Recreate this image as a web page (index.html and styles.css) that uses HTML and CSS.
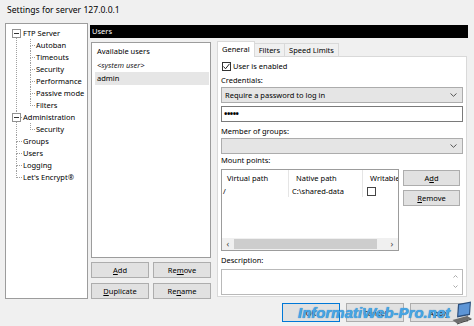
FILE: index.html
```html
<!DOCTYPE html>
<html lang="en">
<head>
    <meta charset="UTF-8">
    <meta name="viewport" content="width=device-width, initial-scale=1.0">
    <title>Settings for server 127.0.0.1</title>
    <link rel="stylesheet" href="styles.css">
</head>
<body>
<div class="window">
    <div class="title">Settings for server 127.0.0.1</div>

    <div class="main">
        <!-- Settings tree -->
        <ul class="tree">
            <li><span class="tgl"></span>FTP Server
                <ul>
                    <li>Autoban</li>
                    <li>Timeouts</li>
                    <li>Security</li>
                    <li>Performance</li>
                    <li>Passive mode</li>
                    <li>Filters</li>
                </ul>
            </li>
            <li><span class="tgl"></span>Administration
                <ul>
                    <li>Security</li>
                </ul>
            </li>
            <li>Groups</li>
            <li>Users</li>
            <li>Logging</li>
            <li>Let's Encrypt&reg;</li>
        </ul>

        <div class="page">
            <div class="page-head">Users</div>
            <div class="page-body">

                <!-- User list -->
                <div class="users">
                    <div class="list">
                        <div class="list-head">Available users</div>
                        <div class="list-item sys">&lt;system user&gt;</div>
                        <div class="list-item sel">admin</div>
                    </div>
                    <div class="btn-grid">
                        <button><u>A</u>dd</button>
                        <button>Re<u>m</u>ove</button>
                        <button><u>D</u>uplicate</button>
                        <button>Re<u>n</u>ame</button>
                    </div>
                </div>

                <!-- User settings tabs -->
                <div class="tabs">
                    <div class="tab-row">
                        <div class="tab active">General</div>
                        <div class="tab">Filters</div>
                        <div class="tab">Speed Limits</div>
                    </div>
                    <div class="tab-panel">
                        <div class="check-row">
                            <span class="check on">
                                <svg width="7" height="7" viewBox="0 0 7 7"><polyline points="0.5,3.5 2.5,5.8 6.5,0.8" fill="none" stroke="#222" stroke-width="1"/></svg>
                            </span>
                            User is enabled
                        </div>
                        <div class="label">Credentials:</div>
                        <div class="select">
                            Require a password to log in
                            <svg class="chev" width="7" height="4" viewBox="0 0 7 4"><polyline points="0.5,0.5 3.5,3.3 6.5,0.5" fill="none" stroke="#555" stroke-width="1"/></svg>
                        </div>
                        <div class="input">&bull;&bull;&bull;&bull;&bull;</div>
                        <div class="label">Member of groups:</div>
                        <div class="select">
                            <svg class="chev" width="7" height="4" viewBox="0 0 7 4"><polyline points="0.5,0.5 3.5,3.3 6.5,0.5" fill="none" stroke="#555" stroke-width="1"/></svg>
                        </div>
                        <div class="label lbl-mount">Mount points:</div>

                        <div class="mount">
                            <div class="grid">
                                <div class="grid-row head">
                                    <div class="cell c1">Virtual path</div>
                                    <div class="cell c2">Native path</div>
                                    <div class="cell c3">Writable</div>
                                </div>
                                <div class="grid-row">
                                    <div class="cell c1">/</div>
                                    <div class="cell c2">C:\shared-data</div>
                                    <div class="cell c3"><span class="check"></span></div>
                                </div>
                                <div class="hscroll">
                                    <span class="arrow">&lsaquo;</span>
                                    <span class="thumb"></span>
                                    <span class="arrow right">&rsaquo;</span>
                                </div>
                            </div>
                            <div class="mount-btns">
                                <button>A<u>d</u>d</button>
                                <button><u>R</u>emove</button>
                            </div>
                        </div>

                        <div class="label">Description:</div>
                        <div class="textarea">
                            <div class="vscroll">
                                <svg width="5" height="3" viewBox="0 0 5 3"><polyline points="0.5,2.5 2.5,0.5 4.5,2.5" fill="none" stroke="#aaa" stroke-width="1"/></svg>
                                <svg width="5" height="3" viewBox="0 0 5 3"><polyline points="0.5,0.5 2.5,2.5 4.5,0.5" fill="none" stroke="#aaa" stroke-width="1"/></svg>
                            </div>
                        </div>
                    </div>
                </div>
            </div>
        </div>
    </div>

    <div class="footer">
        <button class="default">OK</button>
        <button>Cancel</button>
        <button>Apply</button>
    </div>

    <!-- site watermark over the buttons -->
    <div class="watermark">
        <span>InformatiWeb-Pro.net</span>
        <svg width="20" height="24" viewBox="0 0 20 24">
            <path d="M6 3 L19 0.5 L18 14 L5 16.5 Z" fill="#2b4f7e"/>
            <path d="M7.2 4 L17.8 2 L17 12.8 L6.3 14.8 Z" fill="#5d95d6"/>
            <path d="M0.5 19 L15 15 L19.5 17.5 L5 22.5 Z" fill="#6d6d6d"/>
            <path d="M5 22.5 L19.5 17.5 L19.5 18.6 L5 23.6 Z" fill="#3f3f3f"/>
        </svg>
    </div>
</div>
</body>
</html>
```

FILE: styles.css
```css
* { box-sizing: border-box; }

body {
    margin: 0;
    background: #f0f0f0;
    font-family: "Noto Sans", "Open Sans", sans-serif;
    font-size: 7.5px;
    color: #000;
}
.window {
    position: relative;
    width: 474px;
    height: 326px;
    overflow: hidden;
}
.title {
    height: 23px;
    padding: 4px 7px 0;
    line-height: 12px;
    font-size: 8.6px;
}
.main {
    display: flex;
    height: 277px;
    padding-left: 5px;
}

/* tree */
.tree {
    width: 83px;
    height: 276px;
    margin: 0;
    padding: 3px 0 0;
    list-style: none;
    background: #fff;
    border: 1px solid #9c9c9c;
}
.tree ul { margin: 0; padding: 0; list-style: none; }
.tree li {
    position: relative;
    padding-left: 17px;
    line-height: 12px;
    white-space: nowrap;
}
.tree ul li { padding-left: 13px; }
.tree li::before {
    content: "";
    position: absolute;
    left: 10px;
    top: 0;
    width: 5px;
    height: 6px;
    border-left: 1px dotted #a0a0a0;
    border-bottom: 1px dotted #a0a0a0;
}
.tree ul li::before { left: 7px; width: 4px; }
.tree li::after {
    content: "";
    position: absolute;
    left: 10px;
    top: 6px;
    bottom: 0;
    border-left: 1px dotted #a0a0a0;
}
.tree ul li::after { left: 7px; }
.tree li:last-child::after { display: none; }
.tree > li:first-child::before { border-left: none; }
.tgl {
    position: absolute;
    left: 6px;
    top: 2px;
    z-index: 1;
    width: 9px;
    height: 9px;
    background: #fff;
    border: 1px solid #919191;
}
.tgl::after {
    content: "";
    position: absolute;
    left: 1px;
    top: 3px;
    width: 5px;
    height: 1px;
    background: #333;
}

/* right page */
.page {
    width: 378px;
    margin-left: 2px;
    padding-top: 2px;
}
.page-head {
    height: 13px;
    padding-left: 2px;
    line-height: 13px;
    background: #000;
    color: #fff;
}
.page-body {
    display: flex;
    gap: 6px;
    padding: 4px 1px 0;
}

.users {
    width: 120px;
    display: flex;
    flex-direction: column;
    gap: 4px;
}
.list {
    height: 216px;
    background: #fff;
    border: 1px solid #9c9c9c;
}
.list-head {
    height: 16px;
    line-height: 16px;
    padding-left: 5px;
}
.list-item {
    height: 13px;
    line-height: 13px;
    margin: 0 1px 0 3px;
    padding-left: 2px;
}
.list-item.sys { font-style: italic; color: #222; }
.list-item.sel { background: #e6e6e6; }

button {
    font: inherit;
    color: #000;
    height: 16px;
    padding: 0;
    background: #e1e1e1;
    border: 1px solid #adadad;
}
.btn-grid {
    display: grid;
    grid-template-columns: 58px 58px;
    gap: 5px 4px;
}

/* tabs */
.tabs {
    width: 250px;
    margin-top: -1px;
}
.tab-row {
    display: flex;
    align-items: flex-end;
    height: 15px;
}
.tab {
    height: 13px;
    line-height: 12px;
    padding: 0 4px;
    margin-left: -1px;
    background: #f0f0f0;
    border: 1px solid #d9d9d9;
    border-bottom: none;
}
.tab.active {
    position: relative;
    z-index: 1;
    height: 16px;
    margin: 0 0 -1px;
    padding-top: 1px;
    background: #fff;
}
.tab-panel {
    height: 241px;
    padding: 4px 3px 0;
    background: #fff;
    border: 1px solid #d9d9d9;
}

.check-row {
    display: flex;
    align-items: center;
    gap: 2px;
    height: 10px;
    padding-left: 1px;
}
.check {
    display: inline-flex;
    align-items: center;
    justify-content: center;
    width: 9px;
    height: 9px;
    background: #fff;
    border: 1px solid #333;
}
.label {
    height: 12px;
    line-height: 12px;
    margin-top: 3px;
}
.select {
    position: relative;
    height: 16px;
    margin-top: 1px;
    padding-left: 3px;
    line-height: 14px;
    background: #e5e5e5;
    border: 1px solid #acacac;
}
.chev {
    position: absolute;
    right: 5px;
    top: 5px;
}
.input {
    height: 16px;
    margin-top: 3px;
    padding-left: 2px;
    line-height: 14px;
    font-size: 9px;
    font-weight: bold;
    letter-spacing: -0.5px;
    border: 1px solid #7a7a7a;
}
.label.lbl-mount { margin-top: 0; }

/* mount points */
.mount {
    display: flex;
    gap: 4px;
    height: 82px;
    margin-top: 3px;
}
.grid {
    display: flex;
    flex-direction: column;
    width: 178px;
    overflow: hidden;
    background: #fff;
    border: 1px solid #9c9c9c;
}
.grid-row {
    display: flex;
    height: 11px;
    line-height: 11px;
}
.grid-row.head { height: 16px; line-height: 16px; }
.cell {
    flex: none;
    white-space: nowrap;
    border-right: 1px solid #e5e5e5;
}
.c1 { width: 67px; padding-left: 1px; }
.c2 { width: 74px; padding-left: 3px; }
.c3 { width: 60px; padding-left: 4px; }
.head .c1 { padding-left: 5px; }
.head .c2, .head .c3 { padding-left: 7px; }
.c3 .check { border-color: #444; margin-top: 1px; }

.hscroll {
    display: flex;
    align-items: center;
    height: 12px;
    margin-top: auto;
    background: #f0f0f0;
}
.arrow {
    width: 12px;
    text-align: center;
    font-size: 9px;
    line-height: 10px;
    color: #444;
}
.arrow.right { margin-left: auto; }
.thumb {
    width: 143px;
    height: 10px;
    background: #cdcdcd;
}
.mount-btns {
    display: flex;
    flex-direction: column;
    gap: 4px;
    width: 57px;
    padding-top: 1px;
}

.textarea {
    position: relative;
    height: 26px;
    margin-top: 3px;
    border: 1px solid #b9b9b9;
}
.vscroll {
    position: absolute;
    right: 4px;
    top: 5px;
    display: flex;
    flex-direction: column;
    gap: 7px;
}
.vscroll svg { display: block; }

/* dialog buttons */
.footer {
    display: flex;
    justify-content: flex-end;
    gap: 6px;
    padding: 3px 6px 0 0;
}
.footer button {
    width: 58px;
    height: 19px;
}
.footer .default { border-color: #0078d7; }

.watermark {
    position: absolute;
    left: 298px;
    top: 300px;
    display: flex;
    align-items: flex-end;
    gap: 2px;
    font: italic bold 15px "Liberation Sans", Arial, sans-serif;
    color: #47a5e4;
    text-shadow: 0 0 1px #1b6cb4;
}
.watermark span { line-height: 25px; }
```
